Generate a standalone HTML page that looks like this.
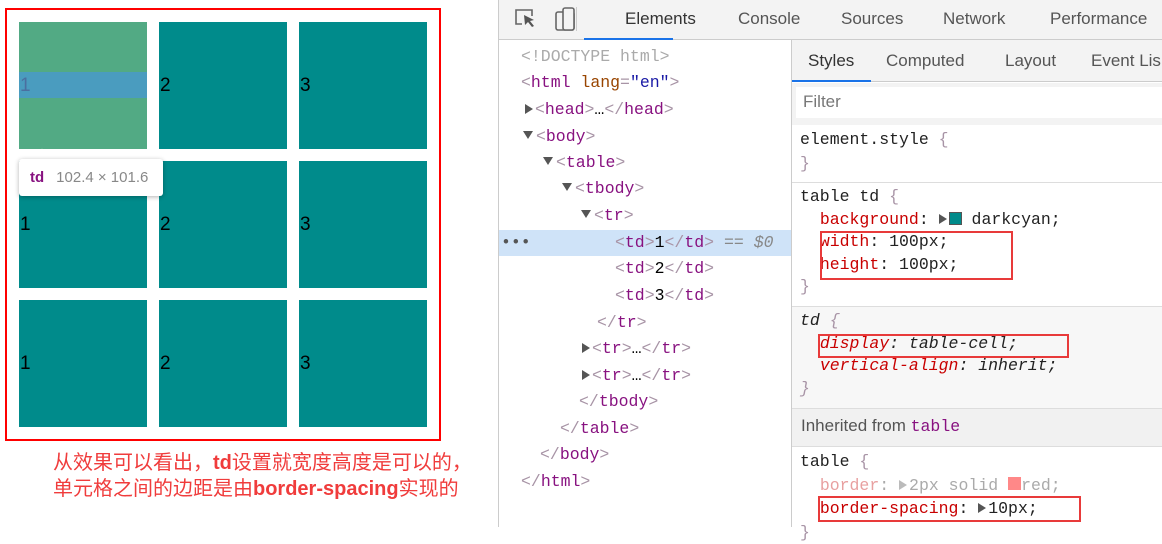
<!DOCTYPE html>
<html><head><meta charset="utf-8"><style>
*{margin:0;padding:0;box-sizing:border-box}
body{width:1162px;height:527px;overflow:hidden;background:#fff;position:relative;font-family:"Liberation Sans",sans-serif}
.a{position:absolute;white-space:nowrap}
.cell{position:absolute;width:128px;height:127px;background:#008b8b;font-size:19px;color:#000;line-height:127px;padding-left:1px}
.mono{font-family:"Liberation Mono",monospace;font-size:16.5px}
.t{color:#881280}.at{color:#994500}.av{color:#1a1aa6}.g{color:#a894a6}
.dl{position:absolute;left:0;height:26px;line-height:26px;width:292px;white-space:nowrap}
.p{color:#c80000}.r{border:2px solid #e83a3a;position:absolute}
.tri{display:inline-block;width:0;height:0;border-left:8px solid #555;border-top:5px solid transparent;border-bottom:5px solid transparent;margin-right:2px}
.trd{display:inline-block;width:0;height:0;border-top:8px solid #555;border-left:5px solid transparent;border-right:5px solid transparent;margin-right:3px;vertical-align:2px}
</style></head><body>
<div class="a" style="left:5px;top:8px;width:436px;height:433px;border:2px solid #f00"></div>
<div class="cell" style="left:19px;top:22px;background:#52aa84"><div style="position:absolute;left:0;top:50px;width:128px;height:26px;background:#4a9cbf"></div><span style="position:relative;color:#4b6fa0">1</span></div>
<div class="cell" style="left:159px;top:22px">2</div>
<div class="cell" style="left:299px;top:22px">3</div>
<div class="cell" style="left:19px;top:161px">1</div>
<div class="cell" style="left:159px;top:161px">2</div>
<div class="cell" style="left:299px;top:161px">3</div>
<div class="cell" style="left:19px;top:300px">1</div>
<div class="cell" style="left:159px;top:300px">2</div>
<div class="cell" style="left:299px;top:300px">3</div>
<div class="a" style="left:34px;top:152px;width:16px;height:16px;background:#fff;transform:rotate(45deg)"></div>
<div class="a" style="left:19px;top:159px;width:144px;height:37px;background:#fff;border-radius:3px;box-shadow:0 1px 5px rgba(0,0,0,.3);font-size:15px;line-height:37px;padding-left:11px"><b style="color:#881280">td</b><span style="color:#888;margin-left:12px">102.4 × 101.6</span></div>
<div class="a" style="left:53px;top:450px;color:#f03c3c;font-size:20px;line-height:26px;font-family:'Liberation Sans','Noto Sans CJK SC',sans-serif">从效果可以看出，<b>td</b>设置就宽度高度是可以的，<br>单元格之间的边距是由<b>border-spacing</b>实现的</div>

<div class="a" style="left:498px;top:0;width:1px;height:527px;background:#ccc"></div>
<div class="a" style="left:499px;top:0;width:663px;height:40px;background:#f3f3f3;border-bottom:1px solid #ccc"></div>
<svg class="a" style="left:512px;top:6px" width="70" height="26" viewBox="0 0 70 26"><path d="M10 18H4V4h16v6" fill="none" stroke="#666" stroke-width="1.6"/><path d="M12 9l10 5-4 1 4 5-2 1-4-5-3 3z" fill="#555"/><rect x="44" y="6" width="18" height="18" rx="2" fill="none" stroke="#666" stroke-width="1.6"/><rect x="51" y="2" width="11" height="22" rx="2" fill="#f3f3f3" stroke="#666" stroke-width="1.6"/></svg>
<div class="a" style="left:576px;top:7px;width:1px;height:24px;background:#ccc"></div>
<div class="a" style="left:584px;top:0;width:89px;height:40px;border-bottom:2px solid #1a73e8"></div>
<div class="a" style="top:9px;font-size:17px;color:#333;left:625px">Elements</div>
<div class="a" style="top:9px;font-size:17px;color:#555;left:738px">Console</div>
<div class="a" style="top:9px;font-size:17px;color:#555;left:841px">Sources</div>
<div class="a" style="top:9px;font-size:17px;color:#555;left:943px">Network</div>
<div class="a" style="top:9px;font-size:17px;color:#555;left:1050px">Performance</div>

<div class="a mono" style="left:499px;top:44px;width:292px;height:483px">
<div class="dl" style="top:0;padding-left:22px;color:#aaa">&lt;!DOCTYPE html&gt;</div>
<div class="dl" style="top:26px;padding-left:22px"><span class="g">&lt;</span><span class="t">html</span> <span class="at">lang</span><span class="g">=</span><span class="av">"en"</span><span class="g">&gt;</span></div>
<div class="dl" style="top:53px;padding-left:26px"><span class="tri"></span><span class="t"><span class="g">&lt;</span>head<span class="g">&gt;</span></span>…<span class="g">&lt;/</span><span class="t">head</span><span class="g">&gt;</span></div>
<div class="dl" style="top:80px;padding-left:24px"><span class="trd"></span><span class="g">&lt;</span><span class="t">body</span><span class="g">&gt;</span></div>
<div class="dl" style="top:106px;padding-left:44px"><span class="trd"></span><span class="g">&lt;</span><span class="t">table</span><span class="g">&gt;</span></div>
<div class="dl" style="top:132px;padding-left:63px"><span class="trd"></span><span class="g">&lt;</span><span class="t">tbody</span><span class="g">&gt;</span></div>
<div class="dl" style="top:159px;padding-left:82px"><span class="trd"></span><span class="g">&lt;</span><span class="t">tr</span><span class="g">&gt;</span></div>
<div class="dl" style="top:186px;padding-left:116px;background:#cfe3f8"><span style="position:absolute;left:2px;color:#555">•••</span><span class="g">&lt;</span><span class="t">td</span><span class="g">&gt;</span>1<span class="g">&lt;/</span><span class="t">td</span><span class="g">&gt;</span> <span style="color:#888">== <i>$0</i></span></div>
<div class="dl" style="top:212px;padding-left:116px"><span class="g">&lt;</span><span class="t">td</span><span class="g">&gt;</span>2<span class="g">&lt;/</span><span class="t">td</span><span class="g">&gt;</span></div>
<div class="dl" style="top:239px;padding-left:116px"><span class="g">&lt;</span><span class="t">td</span><span class="g">&gt;</span>3<span class="g">&lt;/</span><span class="t">td</span><span class="g">&gt;</span></div>
<div class="dl" style="top:266px;padding-left:98px"><span class="g">&lt;/</span><span class="t">tr</span><span class="g">&gt;</span></div>
<div class="dl" style="top:292px;padding-left:83px"><span class="tri"></span><span class="g">&lt;</span><span class="t">tr</span><span class="g">&gt;</span>…<span class="g">&lt;/</span><span class="t">tr</span><span class="g">&gt;</span></div>
<div class="dl" style="top:319px;padding-left:83px"><span class="tri"></span><span class="g">&lt;</span><span class="t">tr</span><span class="g">&gt;</span>…<span class="g">&lt;/</span><span class="t">tr</span><span class="g">&gt;</span></div>
<div class="dl" style="top:345px;padding-left:80px"><span class="g">&lt;/</span><span class="t">tbody</span><span class="g">&gt;</span></div>
<div class="dl" style="top:372px;padding-left:61px"><span class="g">&lt;/</span><span class="t">table</span><span class="g">&gt;</span></div>
<div class="dl" style="top:398px;padding-left:41px"><span class="g">&lt;/</span><span class="t">body</span><span class="g">&gt;</span></div>
<div class="dl" style="top:425px;padding-left:22px"><span class="g">&lt;/</span><span class="t">html</span><span class="g">&gt;</span></div>
</div>

<div class="a" style="left:791px;top:40px;width:1px;height:487px;background:#ccc"></div>
<div class="a" style="left:792px;top:40px;width:370px;height:42px;background:#f3f3f3;border-bottom:1px solid #ccc"></div>
<div class="a" style="left:792px;top:80px;width:79px;height:2px;background:#1a73e8"></div>
<div class="a" style="top:51px;font-size:17px;color:#333;left:808px">Styles</div>
<div class="a" style="top:51px;font-size:17px;color:#555;left:886px">Computed</div>
<div class="a" style="top:51px;font-size:17px;color:#555;left:1005px">Layout</div>
<div class="a" style="top:51px;font-size:17px;color:#555;left:1091px">Event Lis</div>
<div class="a" style="left:792px;top:83px;width:370px;height:42px;background:#f3f3f3"></div>
<div class="a" style="left:796px;top:87px;width:366px;height:31px;background:#fff;font-size:17px;color:#777;padding:5px 0 0 7px">Filter</div>

<div class="a mono" style="left:800px;top:128px;line-height:24px;color:#222">element.style <span class="g">{</span><br><span class="g">}</span></div>
<div class="a" style="left:792px;top:182px;width:370px;height:1px;background:#ddd"></div>
<div class="a mono" style="left:800px;top:186px;line-height:22.5px;color:#222">table td <span class="g">{</span><br>&nbsp;&nbsp;<span class="p">background</span>: <span class="tri"></span><span style="display:inline-block;width:13px;height:13px;background:#008b8b;border:1px solid #555;vertical-align:-1px"></span> darkcyan;<br>&nbsp;&nbsp;<span class="p">width</span>: 100px;<br>&nbsp;&nbsp;<span class="p">height</span>: 100px;<br><span class="g">}</span></div>
<div class="r" style="left:820px;top:231px;width:193px;height:49px"></div>
<div class="a" style="left:792px;top:306px;width:370px;height:102px;background:#f7f7f7;border-top:1px solid #ddd"></div>
<div class="a mono" style="left:800px;top:310px;line-height:22.5px;color:#222;font-style:italic">td <span class="g">{</span><br>&nbsp;&nbsp;<span class="p">display</span>: table-cell;<br>&nbsp;&nbsp;<span class="p">vertical-align</span>: inherit;<br><span class="g">}</span></div>
<div class="r" style="left:818px;top:334px;width:251px;height:24px"></div>
<div class="a" style="left:792px;top:408px;width:370px;height:39px;background:#f1f1f1;border-top:1px solid #ddd;border-bottom:1px solid #ddd"></div>
<div class="a" style="left:801px;top:416px;font-size:17px;color:#555">Inherited from <span class="mono t">table</span></div>
<div class="a mono" style="left:800px;top:450px;line-height:23.5px;color:#222">table <span class="g">{</span><br>&nbsp;&nbsp;<span style="color:#e8a0a0">border</span><span style="color:#aaa">: <span class="tri" style="border-left-color:#bbb"></span>2px solid <span style="display:inline-block;width:13px;height:13px;background:#f88"></span>red;</span><br>&nbsp;&nbsp;<span class="p">border-spacing</span>: <span class="tri"></span>10px;<br><span class="g">}</span></div>
<div class="r" style="left:818px;top:496px;width:263px;height:26px"></div>
</body></html>
